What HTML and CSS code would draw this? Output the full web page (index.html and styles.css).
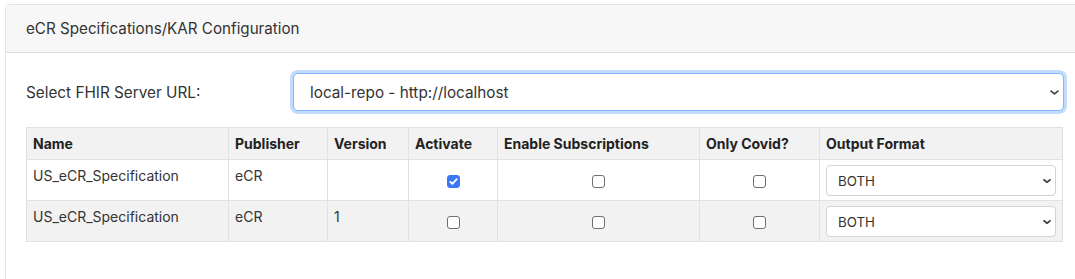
FILE: index.html
```html
<!DOCTYPE html>
<html lang="en">
<head>
    <meta charset="UTF-8">
    <meta name="viewport" content="width=device-width, initial-scale=1.0">
    <title>eCR Specifications/KAR Configuration</title>
    <link rel="stylesheet" href="styles.css">
</head>
<body>

<div class="card">
    <div class="card-header">eCR Specifications/KAR Configuration</div>

    <div class="card-body">
        <div class="server-row">
            <label class="server-label" for="fhir-server">Select FHIR Server URL:</label>
            <select class="form-select" id="fhir-server">
                <option>local-repo - http://localhost</option>
            </select>
        </div>

        <table class="kar-table">
            <colgroup>
                <col style="width: 202px">
                <col style="width: 99px">
                <col style="width: 81px">
                <col style="width: 89px">
                <col style="width: 202px">
                <col style="width: 120px">
                <col>
            </colgroup>
            <thead>
                <tr>
                    <th>Name</th>
                    <th>Publisher</th>
                    <th>Version</th>
                    <th>Activate</th>
                    <th>Enable Subscriptions</th>
                    <th>Only Covid?</th>
                    <th>Output Format</th>
                </tr>
            </thead>
            <tbody>
                <tr>
                    <td>US_eCR_Specification</td>
                    <td>eCR</td>
                    <td></td>
                    <td class="check-cell"><input type="checkbox" class="check" checked></td>
                    <td class="check-cell"><input type="checkbox" class="check"></td>
                    <td class="check-cell"><input type="checkbox" class="check"></td>
                    <td class="format-cell">
                        <select class="form-select-sm">
                            <option>BOTH</option>
                        </select>
                    </td>
                </tr>
                <tr>
                    <td>US_eCR_Specification</td>
                    <td>eCR</td>
                    <td>1</td>
                    <td class="check-cell"><input type="checkbox" class="check"></td>
                    <td class="check-cell"><input type="checkbox" class="check"></td>
                    <td class="check-cell"><input type="checkbox" class="check"></td>
                    <td class="format-cell">
                        <select class="form-select-sm">
                            <option>BOTH</option>
                        </select>
                    </td>
                </tr>
            </tbody>
        </table>
    </div>
</div>

</body>
</html>
```

FILE: styles.css
```css
body {
    font-family: Inter, "Noto Sans", Arial, sans-serif;
    margin: 0;
    padding: 0;
    background-color: #fff;
    color: #212529;
    overflow: hidden;
}

.card {
    margin: 4px 0 0 5px;
    width: 1078px;
    height: 300px;
    border: 1px solid #e3e3e3;
    border-radius: 4px;
    background-color: #fff;
}

.card-header {
    height: 47px;
    line-height: 47px;
    padding: 0 20px;
    font-size: 15.2px;
    color: #333;
    background-color: #f7f7f7;
    border-bottom: 1px solid #dedede;
}

.card-body {
    padding: 20px;
}

.server-row {
    display: flex;
    align-items: center;
    margin-bottom: 16px;
}

.server-label {
    width: 267px;
    font-size: 15.3px;
    color: #333;
}

.form-select {
    flex: 1;
    height: 38px;
    padding: 0 36px 0 16px;
    font-family: inherit;
    font-size: 15.3px;
    color: #333;
    background-color: #fff;
    border: 1px solid #86b7fe;
    border-radius: 5px;
    box-shadow: 0 0 0 3px rgba(13, 110, 253, 0.25);
    appearance: none;
    background-image: url("data:image/svg+xml,%3csvg xmlns='http://www.w3.org/2000/svg' viewBox='0 0 16 16'%3e%3cpath fill='none' stroke='%23444' stroke-linecap='round' stroke-linejoin='round' stroke-width='2.6' d='M3 6l5 4 5-4'/%3e%3c/svg%3e");
    background-repeat: no-repeat;
    background-position: right 3px center;
    background-size: 11px 11px;
}

.kar-table {
    width: 1037px;
    table-layout: fixed;
    border-collapse: collapse;
    font-size: 14px;
}

.kar-table th,
.kar-table td {
    border: 1px solid #dfe1e4;
    padding: 6px 6px;
    text-align: left;
    vertical-align: top;
    line-height: 20px;
}

.kar-table th {
    line-height: 19px;
    font-weight: 700;
    background-color: #f2f2f2;
    color: #222;
}

.kar-table tbody tr:nth-child(2) {
    background-color: #f2f2f2;
}

.kar-table td {
    color: #333;
}

.kar-table td.check-cell {
    text-align: center;
    vertical-align: middle;
    padding: 0;
}

.kar-table td.format-cell {
    padding: 5px 6px 4px;
}

.check {
    appearance: none;
    display: inline-block;
    width: 13px;
    height: 13px;
    margin: 0;
    border: 1px solid #6f6f6f;
    border-radius: 3px;
    background-color: #fff;
    vertical-align: middle;
}

.check:checked {
    border-color: #3b78f6;
    background-color: #3b78f6;
    background-image: url("data:image/svg+xml,%3csvg xmlns='http://www.w3.org/2000/svg' viewBox='0 0 12 12'%3e%3cpath fill='none' stroke='%23fff' stroke-linecap='round' stroke-linejoin='round' stroke-width='2' d='M2.5 6.3l2.3 2.3 4.7-5.2'/%3e%3c/svg%3e");
    background-size: 100% 100%;
}

.form-select-sm {
    display: block;
    width: 100%;
    height: 31px;
    padding: 0 28px 0 11px;
    font-family: inherit;
    font-size: 13.3px;
    color: #333;
    background-color: #fff;
    border: 1px solid #d4d4d4;
    border-radius: 4px;
    appearance: none;
    background-image: url("data:image/svg+xml,%3csvg xmlns='http://www.w3.org/2000/svg' viewBox='0 0 16 16'%3e%3cpath fill='none' stroke='%23444' stroke-linecap='round' stroke-linejoin='round' stroke-width='2.6' d='M3 6l5 4 5-4'/%3e%3c/svg%3e");
    background-repeat: no-repeat;
    background-position: right 3px center;
    background-size: 10px 10px;
}
```
